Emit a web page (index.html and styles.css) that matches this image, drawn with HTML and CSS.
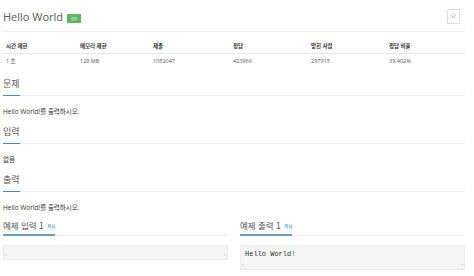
FILE: index.html
```html
<!DOCTYPE html>
<html lang="ko">
<head>
<meta charset="utf-8">
<title>Hello World</title>
<link rel="stylesheet" href="styles.css">
</head>
<body>
<div class="page">
  <header class="page-header">
    <div class="title-wrap">
      <h1 class="title">Hello World</h1>
      <span class="badge">성공</span>
    </div>
    <button class="star-btn" type="button">☆</button>
  </header>

  <table class="info-table">
    <thead>
      <tr>
        <th class="c1">시간 제한</th>
        <th class="c2">메모리 제한</th>
        <th class="c3">제출</th>
        <th class="c4">정답</th>
        <th class="c5">맞힌 사람</th>
        <th class="c6">정답 비율</th>
      </tr>
    </thead>
    <tbody>
      <tr>
        <td>1 초</td>
        <td>128 MB</td>
        <td>1052047</td>
        <td>423966</td>
        <td>297915</td>
        <td>39.402%</td>
      </tr>
    </tbody>
  </table>

  <section class="section">
    <div class="headline"><h2>문제</h2></div>
    <p class="text">Hello World!를 출력하시오.</p>
  </section>
  <section class="section">
    <div class="headline"><h2>입력</h2></div>
    <p class="text">없음</p>
  </section>
  <section class="section">
    <div class="headline"><h2>출력</h2></div>
    <p class="text">Hello World!를 출력하시오.</p>
  </section>

  <div class="samples">
    <div class="sample">
      <div class="headline sample-head"><h2>예제 입력 1 <a class="copy">복사</a></h2></div>
      <div class="pre">
        <pre class="code empty"></pre>
        <div class="hscroll"><span>‹</span><span>›</span></div>
      </div>
    </div>
    <div class="sample">
      <div class="headline sample-head"><h2>예제 출력 1 <a class="copy">복사</a></h2></div>
      <div class="pre">
        <pre class="code">Hello World!</pre>
        <div class="hscroll"><span>‹</span><span>›</span></div>
      </div>
    </div>
  </div>
</div>
</body>
</html>
```

FILE: styles.css
```css
* { box-sizing: border-box; }
html, body { margin: 0; padding: 0; background: #fff; }
body {
  font-family: "Open Sans", "Noto Sans CJK KR", sans-serif;
  color: #555;
}
.page {
  padding: 0 9px 0 3px;
}
.page-header {
  display: flex;
  justify-content: space-between;
  align-items: flex-start;
  padding-top: 9px;
  padding-bottom: 6px;
  border-bottom: 1px solid #eee;
}
.title-wrap {
  display: flex;
  align-items: center;
  gap: 4px;
}
.title {
  margin: 0;
  font-size: 11px;
  line-height: 16px;
  font-weight: 400;
  color: #5a5a5a;
}
.badge {
  display: inline-flex;
  align-items: center;
  justify-content: center;
  width: 14px;
  height: 9px;
  margin-top: 3px;
  background: #5cb85c;
  color: #fff;
  font-size: 3.5px;
  font-family: "Noto Sans CJK KR", sans-serif;
}
.star-btn {
  width: 13px;
  height: 15px;
  margin: 0 5px 0 0;
  padding: 0;
  border: 1px solid #ddd;
  background: #fff;
  color: #444;
  font-size: 7px;
  line-height: 13px;
  font-family: "DejaVu Sans", sans-serif;
}
.info-table {
  width: 100%;
  margin-top: 7px;
  border-collapse: collapse;
  table-layout: fixed;
}
.info-table th, .info-table td {
  text-align: left;
  padding: 3px 3px;
  font-size: 5.5px;
  line-height: 8px;
  font-family: "Open Sans", "Noto Sans CJK KR", sans-serif;
}
.info-table th {
  font-weight: 700;
  color: #333;
  border-bottom: 1px solid #e6e6e6;
}
.info-table td { color: #555; }
.c1 { width: 74px; }
.c2 { width: 73px; }
.c3 { width: 80px; }
.c4 { width: 78px; }
.c5 { width: 78px; }
.section { margin-top: 10px; }
.headline {
  display: flex;
  align-items: flex-end;
  border-bottom: 1px solid #eee;
}
.headline h2 {
  margin: 0 0 -1px 0;
  padding-bottom: 5px;
  border-bottom: 1px solid #4a86b8;
  font-size: 9px;
  line-height: 12px;
  font-weight: 400;
  color: #555;
  font-family: "Noto Sans CJK KR", sans-serif;
}
.text {
  margin: 12px 0 0 0;
  font-size: 6.5px;
  line-height: 8px;
  color: #333;
}
.samples {
  display: grid;
  grid-template-columns: 1fr 1fr;
  align-items: start;
  column-gap: 12px;
  margin-top: 8px;
}
.sample-head h2 {
  font-size: 8.5px;
  line-height: 11px;
  padding-bottom: 2px;
  border-bottom: 2px solid #6f9cc4;
}
.copy {
  margin-left: 1px;
  font-size: 4.5px;
  color: #0076c0;
  vertical-align: middle;
}
.pre {
  margin-top: 9px;
  background: #f5f5f5;
  border: 1px solid #ececec;
  padding: 3px 4px 0 4px;
}
.code {
  margin: 0;
  font-family: "Liberation Mono", "DejaVu Sans Mono", monospace;
  font-size: 7px;
  line-height: 11px;
  color: #333;
}
.code.empty { height: 1px; }
.hscroll {
  display: flex;
  justify-content: space-between;
  height: 9px;
  margin: 0 -3px;
  font-size: 5px;
  line-height: 9px;
  color: #aaa;
  font-family: "DejaVu Sans", sans-serif;
}
```
